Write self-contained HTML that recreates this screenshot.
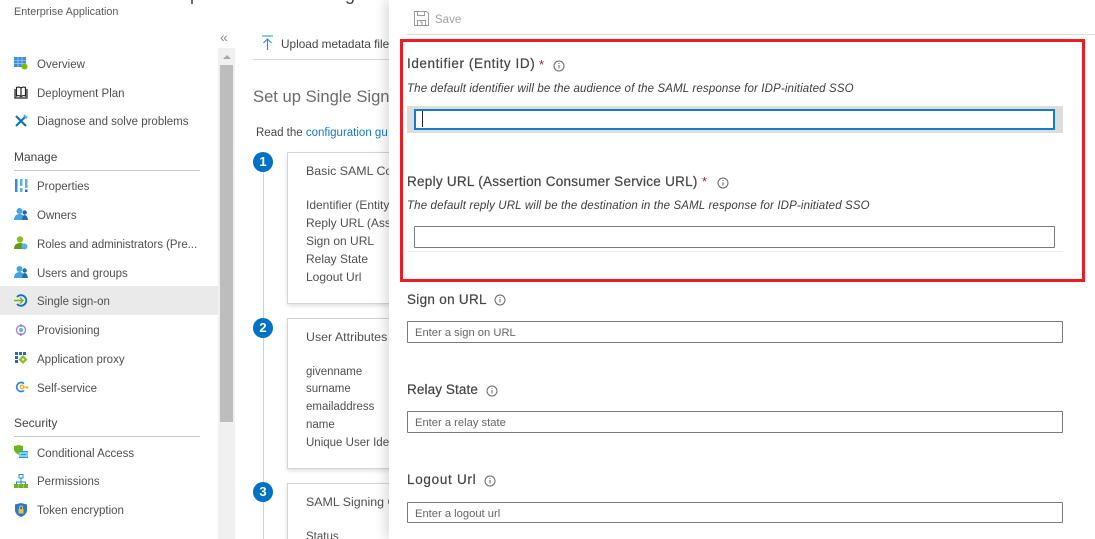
<!DOCTYPE html>
<html><head><meta charset="utf-8"><style>
html,body{margin:0;padding:0;background:#fff}
#r{position:relative;width:1095px;height:539px;overflow:hidden;background:#fff;font-family:"Liberation Sans",sans-serif;font-size:11.5px;color:#4f4f4f}
#r div,#r svg,#r span.t{position:absolute}
.t{white-space:nowrap;line-height:16px;margin-top:1px}
#r .h{font-size:13.5px;color:#444;line-height:18px;-webkit-text-stroke:.2px #444;margin-top:0}
#r .d{font-size:11.5px;font-style:italic;color:#3c3c3c;letter-spacing:.135px;margin-top:0}
#r .p{font-size:11.2px;color:#666;margin-top:0}
#r .n{margin-top:0}
.i{font-size:12px}
.box{box-sizing:border-box;border:1px solid #7a7a7a;background:#fff;border-radius:1px}
.card{box-sizing:border-box;left:287px;width:140px;border:1px solid #d4d4d4;background:#fff;box-shadow:0 2px 4px rgba(0,0,0,.12)}
.c{width:20px;height:20px;left:253px;border-radius:50%;background:#0072c6;color:#fff;font-weight:bold;font-size:13px;line-height:20px;text-align:center}
</style></head><body><div id="r">
<span class="t n" style="left:190px;top:-17px;font-size:18px;line-height:22px;color:#444">p</span>
<span class="t n" style="left:345px;top:-17px;font-size:18px;line-height:22px;color:#444">g</span>
<span class="t" style="left:14px;top:3px;font-size:10.8px;color:#595959">Enterprise Application</span>
<span class="t n" style="left:220px;top:29px;font-size:14px;color:#8a8a8a">«</span>
<div style="left:218px;top:48px;width:17px;height:491px;background:#f0f0f0"></div>
<div style="left:223px;top:55px;width:0;height:0;border:4px solid transparent;border-top:0;border-bottom:4px solid #a8a8a8"></div>
<div style="left:220px;top:65px;width:13px;height:357px;background:#bdbdbd"></div>
<div style="left:0;top:286px;width:218px;height:29px;background:#ebeaea"></div>

<span class="t" style="left:37px;top:56px">Overview</span>
<span class="t" style="left:37px;top:85px">Deployment Plan</span>
<span class="t" style="left:37px;top:113px">Diagnose and solve problems</span>
<span class="t n" style="left:14px;top:149px;color:#444;font-size:12px">Manage</span>
<div style="left:14px;top:170px;width:186px;height:1px;background:#c8c8c8"></div>
<span class="t" style="left:37px;top:178px">Properties</span>
<span class="t" style="left:37px;top:207px">Owners</span>
<span class="t" style="left:37px;top:236px;letter-spacing:-.05px">Roles and administrators (Pre...</span>
<span class="t" style="left:37px;top:265px">Users and groups</span>
<span class="t" style="left:37px;top:293px">Single sign-on</span>
<span class="t" style="left:37px;top:322px">Provisioning</span>
<span class="t" style="left:37px;top:351px">Application proxy</span>
<span class="t" style="left:37px;top:380px">Self-service</span>
<span class="t n" style="left:14px;top:415px;color:#444;font-size:12px">Security</span>
<div style="left:14px;top:436px;width:186px;height:1px;background:#c8c8c8"></div>
<span class="t" style="left:37px;top:445px">Conditional Access</span>
<span class="t" style="left:37px;top:473px">Permissions</span>
<span class="t" style="left:37px;top:502px">Token encryption</span>

<svg style="left:14px;top:57px" width="14" height="13" viewBox="0 0 14 13"><path fill="#3f8ed8" d="M0 0h12v10H0z"/><path stroke="#a9cdf0" stroke-width=".7" d="M4 0v10M8 0v10M0 3.300h12M0 6.600h12"/><circle cx="10.500" cy="9.500" r="3" fill="#7fba00"/></svg>
<svg style="left:14px;top:86px" width="14" height="13" viewBox="0 0 14 13" fill="none" stroke="#222" stroke-width="1.200"><path d="M7 2C5.500 1 3.500 1 2.500 1.500V10c1-.5 3-.5 4.500.5 1.500-1 3.500-1 4.500-.5V1.500C10.500 1 8.500 1 7 2zM7 2v8.500M1 3v9h12V3"/></svg>
<svg style="left:14px;top:114px" width="14" height="14" viewBox="0 0 14 14" fill="none"><path d="M2 12L11 3" stroke="#0a78d0" stroke-width="2.200"/><path d="M2 2l10 10" stroke="#1e6f9f" stroke-width="2.200"/><path d="M10 1l3 3" stroke="#55b3e8" stroke-width="2"/></svg>
<svg style="left:15px;top:179px" width="13" height="14" viewBox="0 0 13 14"><path fill="#2b90d9" d="M0 0h2.500v13H0z"/><path fill="#59b4d9" d="M5 0h2.500v7H5zM5 9h2.500v4H5zM10 0h2.500v9H10z"/><path fill="#0f6fc6" d="M10 10.500h2.500V13H10z"/></svg>
<svg style="left:14px;top:208px" width="14" height="12" viewBox="0 0 14 12"><circle cx="5.500" cy="3" r="3" fill="#45a5dc"/><path fill="#45a5dc" d="M0 12c0-3.500 2-6 5.500-6s5.500 2.500 5.500 6z"/><circle cx="10.700" cy="4.500" r="2.200" fill="#1f6fb5"/><path fill="#1f6fb5" d="M8 12c.2-3 1.200-5 2.700-5s3.100 2 3.300 5z"/></svg>
<svg style="left:14px;top:236px" width="14" height="14" viewBox="0 0 14 14"><circle cx="6" cy="3.500" r="3.200" fill="#8cbf26"/><path fill="#5f9a1a" d="M0 13c0-4 2.500-6 6-6s6 2 6 6z"/><circle cx="10.500" cy="10.500" r="3" fill="#59b4d9"/></svg>
<svg style="left:14px;top:266px" width="14" height="12" viewBox="0 0 14 12"><circle cx="5.500" cy="3" r="3" fill="#45a5dc"/><path fill="#45a5dc" d="M0 12c0-3.500 2-6 5.500-6s5.500 2.500 5.500 6z"/><circle cx="10.700" cy="4.500" r="2.200" fill="#1f6fb5"/><path fill="#1f6fb5" d="M8 12c.2-3 1.200-5 2.700-5s3.100 2 3.300 5z"/></svg>
<svg style="left:14px;top:294px" width="14" height="13" viewBox="0 0 14 13" fill="none"><path d="M3 3a5.300 5.300 0 1 1 0 7" stroke="#1470b8" stroke-width="1.800"/><path d="M0 6.500h9M6 3.500l3 3-3 3" stroke="#6fb320" stroke-width="1.400"/></svg>
<svg style="left:15px;top:323px" width="12" height="14" viewBox="0 0 12 14" fill="none"><circle cx="6" cy="7" r="4.500" stroke="#a98ccf" stroke-width="1.500"/><circle cx="6" cy="7" r="2" fill="#59b4d9"/><path d="M6 1v3M6 10v3" stroke="#7f5fb5"/></svg>
<svg style="left:15px;top:352px" width="13" height="13" viewBox="0 0 13 13"><path fill="#1f6fb5" d="M0 0h3v3H0zM4 0h3v3H4zM8 0h3v3H8zM0 4h3v3H0zM0 8h3v3H0z"/><path fill="#8cbf26" d="M8 3l4.500 4.500L8 12 3.500 7.500z"/><circle cx="8" cy="7.500" r="1.200" fill="#e4f0c0"/></svg>
<svg style="left:15px;top:381px" width="14" height="12" viewBox="0 0 14 12" fill="none"><path d="M9 2.500A4.500 4.500 0 1 0 9 9.500" stroke="#2b88d8" stroke-width="1.700"/><circle cx="7" cy="6" r="1.800" stroke="#e8b21c" stroke-width="1.300"/><path d="M9 6h4.500M12 6v2" stroke="#e8b21c" stroke-width="1.300"/></svg>
<svg style="left:14px;top:445px" width="14" height="13" viewBox="0 0 14 13"><path fill="#6fb320" d="M5 0l4 1v4c0 2.500-2 4-4 5C3 9 1 7.500 0 5V1z"/><path fill="#7fd0f2" d="M5 6h9v7H5z"/><path fill="#2b98dc" d="M5 6h9v1H5zM5 12h9v1H5zM7 9h5v1H7z"/></svg>
<svg style="left:14px;top:474px" width="14" height="14" viewBox="0 0 14 14" fill="none"><path d="M7 4v4M2.500 11V8h9v3M7 8v3" stroke="#1f8ad0"/><path fill="#fff" stroke="#2b88d8" d="M5 .5h4v3.500H5z"/><path fill="#6fb320" d="M0 10h4.500v4H0zM4.800 10h4.400v4H4.800zM9.500 10H14v4H9.500z"/></svg>
<svg style="left:15px;top:503px" width="12" height="14" viewBox="0 0 12 14"><path fill="#2b78cc" d="M6 0l6 1.500V7c0 3.500-3 6-6 7-3-1-6-3.500-6-7V1.500z"/><path fill="#f2c037" d="M3.500 6h5v4.500h-5z"/><path fill="none" stroke="#f2c037" d="M4.500 6V4.500a1.500 1.500 0 0 1 3 0V6"/></svg>

<svg style="left:261px;top:35px" width="13" height="16" viewBox="0 0 13 16" fill="none" stroke="#2b88d8" stroke-width="1.100"><path d="M1 1h11M6.500 15V4M2.500 8l4-4 4 4"/></svg>
<span class="t n" style="left:281px;top:36px;color:#444;font-size:11.8px">Upload metadata file</span>
<div style="left:253px;top:59px;width:140px;height:1px;background:#d8d8d8"></div>
<span class="t n" style="left:253px;top:86px;font-size:16.6px;line-height:22px;color:#6b6b6b">Set up Single Sign</span>
<span class="t" style="left:256px;top:124px;color:#444">Read the <span style="color:#1579c8">configuration gu</span></span>

<div style="left:263px;top:160px;width:1px;height:379px;background:#cfcfcf"></div>
<div class="c" style="top:152px">1</div>
<div class="c" style="top:318px">2</div>
<div class="c" style="top:482px">3</div>
<div class="card" style="top:152px;height:152px"></div>
<div class="card" style="top:318px;height:151px"></div>
<div class="card" style="top:483px;height:70px"></div>
<span class="t n" style="left:306px;top:163px;font-size:12.4px">Basic SAML Co</span>
<span class="t n i" style="left:306px;top:197px">Identifier (Entity</span>
<span class="t n i" style="left:306px;top:215px">Reply URL (Asse</span>
<span class="t n i" style="left:306px;top:233px">Sign on URL</span>
<span class="t n i" style="left:306px;top:251px">Relay State</span>
<span class="t n i" style="left:306px;top:269px">Logout Url</span>
<span class="t n" style="left:306px;top:329px;font-size:12.4px">User Attributes</span>
<span class="t" style="left:306px;top:363px">givenname</span>
<span class="t" style="left:306px;top:380px">surname</span>
<span class="t" style="left:306px;top:398px">emailaddress</span>
<span class="t" style="left:306px;top:416px">name</span>
<span class="t" style="left:306px;top:434px">Unique User Ide</span>
<span class="t n" style="left:306px;top:494px;font-size:12.4px">SAML Signing C</span>
<span class="t" style="left:306px;top:528px">Status</span>

<div style="left:389px;top:0;width:706px;height:539px;background:#fff;box-shadow:-5px 0 10px rgba(0,0,0,.12)"></div>
<svg style="left:414px;top:11px" width="15" height="15" viewBox="0 0 15 15" fill="none" stroke="#9a9a9a"><path d="M.5.500h12l2 2v12H.500zM3.500.500v4h7v-4M3.500 14.500v-5h8v5M6 11h2v3.500"/></svg>
<span class="t" style="left:435px;top:11px;color:#a0a0a0">Save</span>
<div style="left:407px;top:34px;width:688px;height:1px;background:#dcdcdc"></div>

<div style="left:400px;top:39px;width:685px;height:243px;box-sizing:border-box;border:3px solid #ed1c24"></div>
<span class="t h" style="left:407px;top:55px;letter-spacing:.58px">Identifier (Entity ID)</span>
<span class="t n" style="left:539px;top:57px;color:#a4262c;font-size:13px">*</span>
<svg style="left:553px;top:60px" width="12" height="12" viewBox="0 0 12 12" fill="none" stroke="#666"><circle cx="6" cy="6" r="5"/><path d="M6 5v3.500M6 3v1"/></svg>
<span class="t d" style="left:407px;top:81px">The default identifier will be the audience of the SAML response for IDP-initiated SSO</span>
<div style="left:407px;top:106px;width:656px;height:27px;background:#dfdddb"></div>
<div style="left:414px;top:109px;width:641px;height:21px;box-sizing:border-box;border:2px solid #0f7dd4;background:#fff"></div>
<div style="left:422px;top:111px;width:1px;height:16px;background:#222"></div>

<span class="t h" style="left:407px;top:173px;letter-spacing:.27px">Reply URL (Assertion Consumer Service URL)</span>
<span class="t n" style="left:702px;top:174px;color:#a4262c;font-size:13px">*</span>
<svg style="left:717px;top:177px" width="12" height="12" viewBox="0 0 12 12" fill="none" stroke="#666"><circle cx="6" cy="6" r="5"/><path d="M6 5v3.500M6 3v1"/></svg>
<span class="t d" style="left:407px;top:198px">The default reply URL will be the destination in the SAML response for IDP-initiated SSO</span>
<div class="box" style="left:414px;top:226px;width:641px;height:22px"></div>
<div style="left:407px;top:251px;width:656px;height:1px;background:#efefef"></div>

<span class="t h" style="left:407px;top:291px;letter-spacing:.3px">Sign on URL</span>
<svg style="left:494px;top:294px" width="12" height="12" viewBox="0 0 12 12" fill="none" stroke="#666"><circle cx="6" cy="6" r="5"/><path d="M6 5v3.500M6 3v1"/></svg>
<div class="box" style="left:407px;top:321px;width:656px;height:22px"></div>
<span class="t p" style="left:415px;top:325px">Enter a sign on URL</span>

<span class="t h" style="left:407px;top:381px;letter-spacing:.11px">Relay State</span>
<svg style="left:486px;top:385px" width="12" height="12" viewBox="0 0 12 12" fill="none" stroke="#666"><circle cx="6" cy="6" r="5"/><path d="M6 5v3.500M6 3v1"/></svg>
<div class="box" style="left:407px;top:411px;width:656px;height:22px"></div>
<span class="t p" style="left:415px;top:415px">Enter a relay state</span>

<span class="t h" style="left:407px;top:471px;letter-spacing:.7px">Logout Url</span>
<svg style="left:484px;top:475px" width="12" height="12" viewBox="0 0 12 12" fill="none" stroke="#666"><circle cx="6" cy="6" r="5"/><path d="M6 5v3.500M6 3v1"/></svg>
<div class="box" style="left:407px;top:502px;width:656px;height:21px"></div>
<span class="t p" style="left:415px;top:506px">Enter a logout url</span>
</div></body></html>
